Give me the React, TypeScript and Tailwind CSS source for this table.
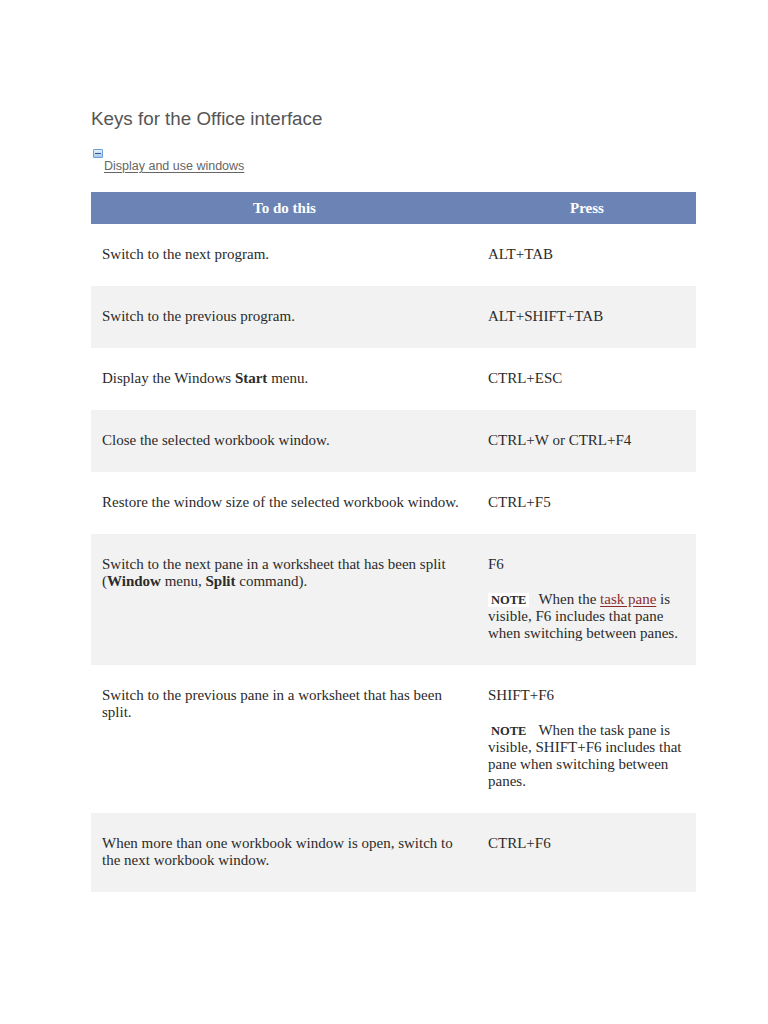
type Row = {
  action: React.ReactNode;
  keys: string;
  note?: React.ReactNode;
};

const rows: Row[] = [
  { action: "Switch to the next program.", keys: "ALT+TAB" },
  { action: "Switch to the previous program.", keys: "ALT+SHIFT+TAB" },
  {
    action: (
      <>
        Display the Windows <b>Start</b> menu.
      </>
    ),
    keys: "CTRL+ESC",
  },
  { action: "Close the selected workbook window.", keys: "CTRL+W or CTRL+F4" },
  { action: "Restore the window size of the selected workbook window.", keys: "CTRL+F5" },
  {
    action: (
      <>
        Switch to the next pane in a worksheet that has been split (<b>Window</b> menu, <b>Split</b> command).
      </>
    ),
    keys: "F6",
    note: (
      <>
        When the{" "}
        <span className="text-[#8b2d2d] underline underline-offset-2">task pane</span> is visible, F6 includes
        that pane when switching between panes.
      </>
    ),
  },
  {
    action: "Switch to the previous pane in a worksheet that has been split.",
    keys: "SHIFT+F6",
    note: "When the task pane is visible, SHIFT+F6 includes that pane when switching between panes.",
  },
  {
    action: "When more than one workbook window is open, switch to the next workbook window.",
    keys: "CTRL+F6",
  },
];

function App() {
  return (
    <div className="min-h-[1024px] bg-white pt-[108px] pl-[91px] font-['Liberation_Serif',serif] text-[15px] text-[#2b2b2b]">
      <h1 className="font-['Liberation_Sans',Arial,sans-serif] text-[18.8px] leading-[22px] text-[#555]">
        Keys for the Office interface
      </h1>

      <div className="mt-[19px] pl-[2px]">
        <div className="h-[9px] w-[10px] rounded-[1px] border border-[#6a9fd8] bg-gradient-to-b from-[#e6f0fb] to-[#a9c8ec] flex items-center justify-center">
          <div className="h-[1.5px] w-[6px] bg-[#2d5a96]" />
        </div>
        <a className="ml-[11px] mt-[1px] block font-['Liberation_Sans',Arial,sans-serif] text-[12.5px] leading-[14px] text-[#666] underline underline-offset-2">
          Display and use windows
        </a>
      </div>

      <table className="mt-[19px] w-[605px] border-collapse leading-[17px]">
        <thead>
          <tr className="bg-[#6b83b5] text-white">
            <th className="h-[32px] w-[387px] px-[11px] text-center font-bold">To do this</th>
            <th className="h-[32px] px-[10px] text-center font-bold">Press</th>
          </tr>
        </thead>
        <tbody>
          {rows.map((row, i) => (
            <tr key={i} className={i % 2 === 1 ? "bg-[#f2f2f2]" : "bg-white"}>
              <td className="align-top pt-[22px] pb-[23px] pl-[11px] pr-[10px]">{row.action}</td>
              <td className="align-top pt-[22px] pb-[23px] pl-[10px] pr-[8px]">
                <p>{row.keys}</p>
                {row.note && (
                  <p className="mt-[18px]">
                    <span className="mr-[9px] bg-white px-[3px] text-[12.5px] leading-[14px] font-bold">NOTE</span>
                    {row.note}
                  </p>
                )}
              </td>
            </tr>
          ))}
        </tbody>
      </table>
    </div>
  );
}

export default App;
